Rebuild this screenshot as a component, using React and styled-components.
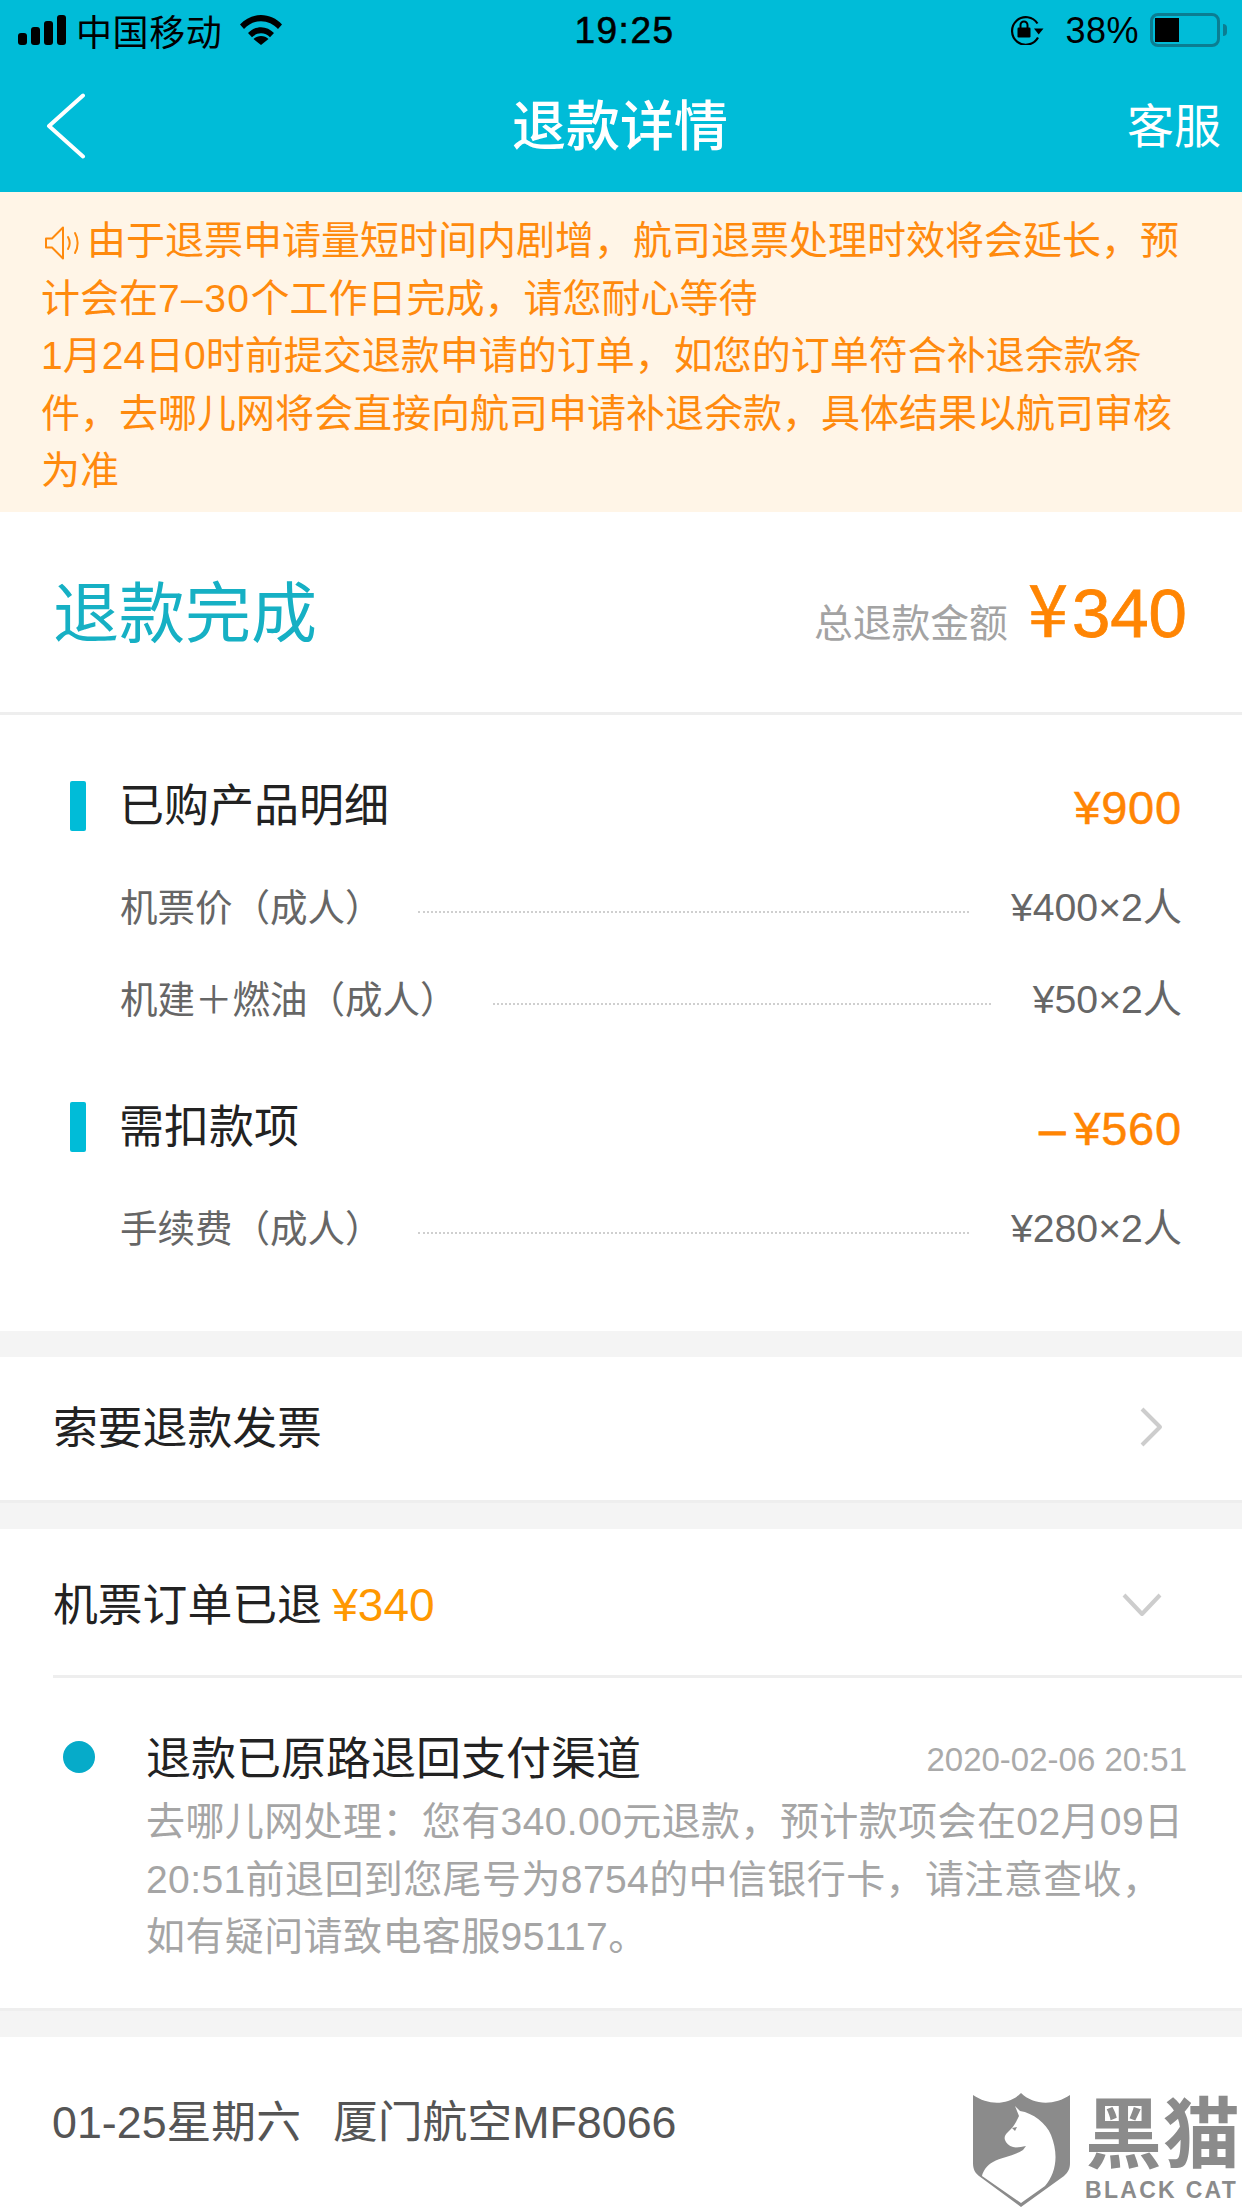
import styled, { createGlobalStyle } from "styled-components";

const GlobalStyle = createGlobalStyle`
  html, body {
    margin: 0;
    padding: 0;
    background: #fff;
  }
  * {
    box-sizing: border-box;
  }
`;

const SignalIcon = () => (
  <svg width="48" height="30" viewBox="0 0 48 30">
    <rect x="0" y="18" width="9" height="12" rx="3" fill="#000" />
    <rect x="13" y="12" width="9" height="18" rx="3" fill="#000" />
    <rect x="26" y="6" width="9" height="24" rx="3" fill="#000" />
    <rect x="39" y="0" width="9" height="30" rx="3" fill="#000" />
  </svg>
);

const WifiIcon = () => (
  <svg width="42" height="30" viewBox="0 0 42 30">
    <path d="M0 9.500C5.500 3.500 13 0 21 0s15.500 3.500 21 9.500l-4 4.500C33.500 9 27.500 6.200 21 6.200S8.500 9 4 14z" fill="#000" />
    <path d="M8 18c3.400-3.600 8-5.800 13-5.800s9.600 2.200 13 5.800l-4 4.300c-2.400-2.500-5.500-4-9-4s-6.600 1.500-9 4z" fill="#000" />
    <path d="M13.500 24c2-1.800 4.600-2.900 7.500-2.900s5.500 1.100 7.500 2.900L21 30z" fill="#000" />
  </svg>
);

const RotationLockIcon = () => (
  <svg width="35" height="30" viewBox="0 0 35 30" fill="none">
    <path d="M29 22.500A13.800 13.800 0 1 1 28.500 8.500" stroke="#000" strokeWidth="2.200" />
    <path d="M25 13.500h9.500l-4.800 6z" fill="#000" />
    <rect x="8.500" y="12.500" width="13" height="10" rx="1.200" fill="#000" />
    <path d="M11.500 13V10a3.500 3.500 0 0 1 7 0V13" stroke="#000" strokeWidth="2" />
  </svg>
);

const SpeakerIcon = () => (
  <svg width="37" height="34" viewBox="0 0 37 34" fill="none" stroke="#ff8a0d" strokeWidth="2">
    <path d="M1 12.500h6L18 1.500v31L7 21.500H1z" strokeLinejoin="round" />
    <path d="M23 11c2 3.500 2 8.500 0 12" strokeLinecap="round" />
    <path d="M30 7c3.500 6 3.500 14 0 20" strokeLinecap="round" />
  </svg>
);

const ChevronLeft = () => (
  <svg width="40" height="66" viewBox="0 0 40 66" fill="none">
    <path d="M37 2.500L3 33l34 30.500" stroke="#fff" strokeWidth="4" strokeLinecap="round" strokeLinejoin="round" />
  </svg>
);

const ChevronRight = () => (
  <svg width="24" height="40" viewBox="0 0 24 40" fill="none">
    <path d="M3 2l18 18L3 38" stroke="#cdcdcd" strokeWidth="4" strokeLinejoin="round" />
  </svg>
);

const ChevronDown = () => (
  <svg width="40" height="24" viewBox="0 0 40 24" fill="none">
    <path d="M2 2l18 19L38 2" stroke="#cdcdcd" strokeWidth="4" strokeLinejoin="round" />
  </svg>
);

const ShieldLogo = () => (
  <svg width="97" height="114" viewBox="0 0 97 114">
    <path d="M0 2C16 13 36 12 48 0c12 12 33 13 49 2v68c0 6-2 9-6 13L48 114 6 83c-4-3-6-7-6-13z" fill="#8b8b8b" />
    <path
      d="M42 13l5 5C60 20 73 30 78 42c8 20 5 38-6 51l-24 17L9 83c1-5 5-11 11-14 9-5 21-6 30-12l3-4c-5 1-10 2-13 1-4-1-7-4-8-7-1-3 0-5 3-8 3-3 6-6 8-10l3-6z"
      fill="#fff"
    />
    <path d="M39 35l5-1-2 4z" fill="#8b8b8b" />
  </svg>
);

const RefundDetail = () => (
  <Page>
    <GlobalStyle />
    <Header>
      <StatusBar>
        <StatusLeft>
          <SignalIcon />
          <Carrier>中国移动</Carrier>
          <WifiIcon />
        </StatusLeft>
        <Clock>19:25</Clock>
        <StatusRight>
          <RotationLockIcon />
          <BatteryText>38%</BatteryText>
          <Battery>
            <BatteryFill />
          </Battery>
          <BatteryNub />
        </StatusRight>
      </StatusBar>
      <NavBar>
        <BackButton>
          <ChevronLeft />
        </BackButton>
        <NavTitle>退款详情</NavTitle>
        <NavAction>客服</NavAction>
      </NavBar>
    </Header>

    <Notice>
      <NoticeIcon>
        <SpeakerIcon />
      </NoticeIcon>
      由于退票申请量短时间内剧增，航司退票处理时效将会延长，预
      <br />
      计会在<NoticeRange>7–30</NoticeRange>个工作日完成，请您耐心等待
      <br />
      1月24日0时前提交退款申请的订单，如您的订单符合补退余款条
      <br />
      件，去哪儿网将会直接向航司申请补退余款，具体结果以航司审核
      <br />
      为准
    </Notice>

    <Summary>
      <SummaryStatus>退款完成</SummaryStatus>
      <SummaryTotal>
        <SummaryLabel>总退款金额</SummaryLabel>
        <SummaryYen>¥</SummaryYen>
        <SummaryAmount>340</SummaryAmount>
      </SummaryTotal>
    </Summary>

    <Breakdown>
      <Group>
        <GroupHead>
          <GroupMark />
          <GroupTitle>已购产品明细</GroupTitle>
          <GroupAmount>¥900</GroupAmount>
        </GroupHead>
        <FeeRow>
          <FeeLabel>机票价（成人）</FeeLabel>
          <FeeDots />
          <FeeValue>¥400×2人</FeeValue>
        </FeeRow>
        <FeeRow>
          <FeeLabel>机建＋燃油（成人）</FeeLabel>
          <FeeDots />
          <FeeValue>¥50×2人</FeeValue>
        </FeeRow>
      </Group>
      <Group>
        <GroupHead>
          <GroupMark />
          <GroupTitle>需扣款项</GroupTitle>
          <GroupAmount>
            <GroupMinus>–</GroupMinus>¥560
          </GroupAmount>
        </GroupHead>
        <FeeRow>
          <FeeLabel>手续费（成人）</FeeLabel>
          <FeeDots />
          <FeeValue>¥280×2人</FeeValue>
        </FeeRow>
      </Group>
    </Breakdown>

    <Gap />

    <LinkRow>
      <RowTitle $lift={8}>索要退款发票</RowTitle>
      <LinkArrow>
        <ChevronRight />
      </LinkArrow>
    </LinkRow>

    <Gap />

    <OrderCard>
      <OrderHead>
        <RowTitle $lift={2}>
          机票订单已退 <OrderAmount>¥340</OrderAmount>
        </RowTitle>
        <OrderArrow>
          <ChevronDown />
        </OrderArrow>
      </OrderHead>
      <Progress>
        <ProgressDot />
        <ProgressBody>
          <ProgressTop>
            <ProgressTitle>退款已原路退回支付渠道</ProgressTitle>
            <ProgressTime>2020-02-06 20:51</ProgressTime>
          </ProgressTop>
          <ProgressText>
            去哪儿网处理：您有340.00元退款，预计款项会在02月09日
            <br />
            20:51前退回到您尾号为8754的中信银行卡，请注意查收，
            <br />
            如有疑问请致电客服95117。
          </ProgressText>
        </ProgressBody>
      </Progress>
    </OrderCard>

    <Gap />

    <FlightRow>
      <span>01-25星期六</span>
      <span>厦门航空MF8066</span>
    </FlightRow>

    <Watermark>
      <ShieldLogo />
      <WatermarkText>
        <WatermarkName>黑猫</WatermarkName>
        <WatermarkLatin>BLACK CAT</WatermarkLatin>
      </WatermarkText>
    </Watermark>
  </Page>
);

export default function App() {
  return <RefundDetail />;
}

const Page = styled.div`
  position: relative;
  width: 1242px;
  height: 2208px;
  overflow: hidden;
  background: #fff;
  font-family: "Liberation Sans", "Noto Sans CJK SC", sans-serif;
`;

const Header = styled.header`
  height: 192px;
  background: #00bcd8;
`;

const StatusBar = styled.div`
  display: grid;
  grid-template-columns: 1fr auto 1fr;
  align-items: center;
  height: 60px;
  padding: 0 15px 0 18px;
  color: #000;
`;

const StatusLeft = styled.div`
  display: flex;
  align-items: center;
`;

const Carrier = styled.span`
  font-size: 36px;
  margin: 0 18px 0 10px;
  letter-spacing: 0.6px;
`;

const Clock = styled.span`
  font-size: 37px;
  font-weight: 500;
  letter-spacing: 1.500px;
  margin: 2px 0 0 4px;
  -webkit-text-stroke: 0.6px #000;
`;

const StatusRight = styled.div`
  display: flex;
  align-items: center;
  justify-content: flex-end;
`;

const BatteryText = styled.span`
  font-size: 36px;
  margin: 2px 11px 0 21px;
  letter-spacing: 0.5px;
`;

const Battery = styled.div`
  width: 70px;
  height: 34px;
  padding: 2px;
  border: 3px solid #0b7d92;
  border-radius: 8px;
`;

const BatteryFill = styled.div`
  width: 24px;
  height: 100%;
  background: #000;
`;

const BatteryNub = styled.div`
  width: 4px;
  height: 12px;
  margin-left: 3px;
  border-radius: 0 4px 4px 0;
  background: #0b7d92;
`;

const NavBar = styled.nav`
  display: grid;
  grid-template-columns: 1fr auto 1fr;
  align-items: center;
  height: 132px;
  padding: 0 21px 8px 46px;
  color: #fff;
`;

const BackButton = styled.div`
  display: flex;
  align-items: center;
  padding-top: 8px;
`;

const NavTitle = styled.div`
  font-size: 54px;
  font-weight: 500;
  text-align: center;
  margin-left: -27px;
`;

const NavAction = styled.div`
  font-size: 47px;
  text-align: right;
`;

const Notice = styled.div`
  height: 320px;
  padding: 20px 40px 0 41px;
  background: #fff5e7;
  color: #ff8a0d;
  font-size: 39px;
  line-height: 57.500px;
  white-space: nowrap;
`;

const NoticeIcon = styled.span`
  display: inline-block;
  width: 46px;
  vertical-align: -6px;
  line-height: 0;
  padding-left: 4px;
`;

const NoticeRange = styled.span`
  letter-spacing: 1.400px;
`;

const Summary = styled.section`
  display: flex;
  align-items: center;
  justify-content: space-between;
  height: 203px;
  padding: 0 55px 0 53px;
  border-bottom: 3px solid #eee;
`;

const SummaryStatus = styled.h1`
  margin: -8px 0 0;
  font-size: 66px;
  font-weight: 400;
  color: #16b0c4;
`;

const SummaryTotal = styled.div`
  display: flex;
  align-items: baseline;
  margin-top: -2px;
`;

const SummaryLabel = styled.span`
  font-size: 38.800px;
  color: #a3a3a3;
  margin-right: 20px;
`;

const SummaryYen = styled.span`
  font-family: "Noto Sans CJK SC", sans-serif;
  font-size: 72px;
  line-height: 1;
  color: #ff8503;
  margin-right: 4px;
  -webkit-text-stroke: 0.6px #ff8503;
`;

const SummaryAmount = styled.span`
  font-size: 69px;
  color: #ff8503;
  -webkit-text-stroke: 0.8px #ff8503;
`;

const Breakdown = styled.section`
  display: flex;
  flex-direction: column;
  gap: 46px;
  height: 616px;
  padding: 56px 60px 0 70px;
`;

const Group = styled.div`
  display: flex;
  flex-direction: column;
`;

const GroupHead = styled.div`
  display: flex;
  align-items: center;
  height: 70px;
  margin-bottom: 21px;
`;

const GroupMark = styled.span`
  width: 16px;
  height: 50px;
  margin-right: 34px;
  border-radius: 2px;
  background: #00bcd8;
`;

const GroupTitle = styled.h2`
  flex: 1;
  margin: -8px 0 0 -1px;
  font-size: 45px;
  font-weight: 400;
  color: #222;
`;

const GroupAmount = styled.span`
  font-size: 47px;
  letter-spacing: 0.8px;
  margin-top: 2px;
  color: #ff8503;
  -webkit-text-stroke: 0.5px #ff8503;
`;

const GroupMinus = styled.span`
  margin-right: 8px;
  -webkit-text-stroke: 1.200px #ff8503;
`;

const FeeRow = styled.div`
  display: flex;
  align-items: center;
  height: 92px;
  padding-left: 50px;
  color: #666;
`;

const FeeLabel = styled.span`
  margin-top: -8px;
  font-size: 37.500px;
  white-space: nowrap;
`;

const FeeDots = styled.span`
  flex: 1;
  margin: 8px 42px 0 35px;
  border-top: 2px dotted #cfcfcf;
`;

const FeeValue = styled.span`
  margin-top: -8px;
  font-size: 39.200px;
  white-space: nowrap;
`;

const Gap = styled.div`
  height: 26px;
  background: #f4f4f4;
`;

const LinkRow = styled.div`
  display: flex;
  align-items: center;
  justify-content: space-between;
  height: 146px;
  padding: 0 79px 0 53px;
  border-bottom: 3px solid #eee;
`;

const LinkArrow = styled.span`
  display: flex;
  margin-top: -4px;
`;

const RowTitle = styled.div`
  margin-top: ${(props) => -props.$lift}px;
  font-size: 44.800px;
  color: #222;
`;

const OrderCard = styled.section`
  padding-left: 53px;
  height: 482px;
  border-bottom: 3px solid #eee;
`;

const OrderHead = styled.div`
  display: flex;
  align-items: center;
  justify-content: space-between;
  height: 149px;
  padding-right: 80px;
  border-bottom: 3px solid #eee;
`;

const OrderArrow = styled.span`
  display: flex;
  margin-top: 6px;
`;

const OrderAmount = styled.span`
  font-size: 46px;
  margin-left: -2px;
  color: #ff9800;
`;

const Progress = styled.div`
  display: flex;
  padding: 63px 55px 0 10px;
`;

const ProgressDot = styled.span`
  flex: none;
  width: 32px;
  height: 32px;
  margin: 0 51px 0 0;
  border-radius: 50%;
  background: #06abc9;
`;

const ProgressBody = styled.div`
  flex: 1;
  margin-top: -10px;
`;

const ProgressTop = styled.div`
  display: flex;
  align-items: center;
  justify-content: space-between;
  height: 48px;
`;

const ProgressTitle = styled.div`
  font-size: 45px;
  color: #222;
`;

const ProgressTime = styled.div`
  margin-top: 10px;
  font-size: 33px;
  color: #aaa;
`;

const ProgressText = styled.p`
  margin: 14px 0 0;
  font-size: 39px;
  line-height: 57.500px;
  letter-spacing: 0.4px;
  color: #a5a5a5;
  white-space: nowrap;
`;

const FlightRow = styled.div`
  display: flex;
  gap: 32px;
  padding: 49px 0 0 52px;
  font-size: 44.800px;
  color: #555;
`;

const Watermark = styled.div`
  position: absolute;
  left: 973px;
  top: 2093px;
  display: flex;
  gap: 15px;
`;

const WatermarkText = styled.div`
  display: flex;
  flex-direction: column;
  align-items: flex-start;
  color: #8b8b8b;
`;

const WatermarkName = styled.div`
  font-size: 77px;
  font-weight: 700;
  line-height: 84px;
  letter-spacing: 1px;
`;

const WatermarkLatin = styled.div`
  font-size: 23px;
  font-weight: 700;
  line-height: 26px;
  letter-spacing: 2.300px;
  white-space: nowrap;
`;
